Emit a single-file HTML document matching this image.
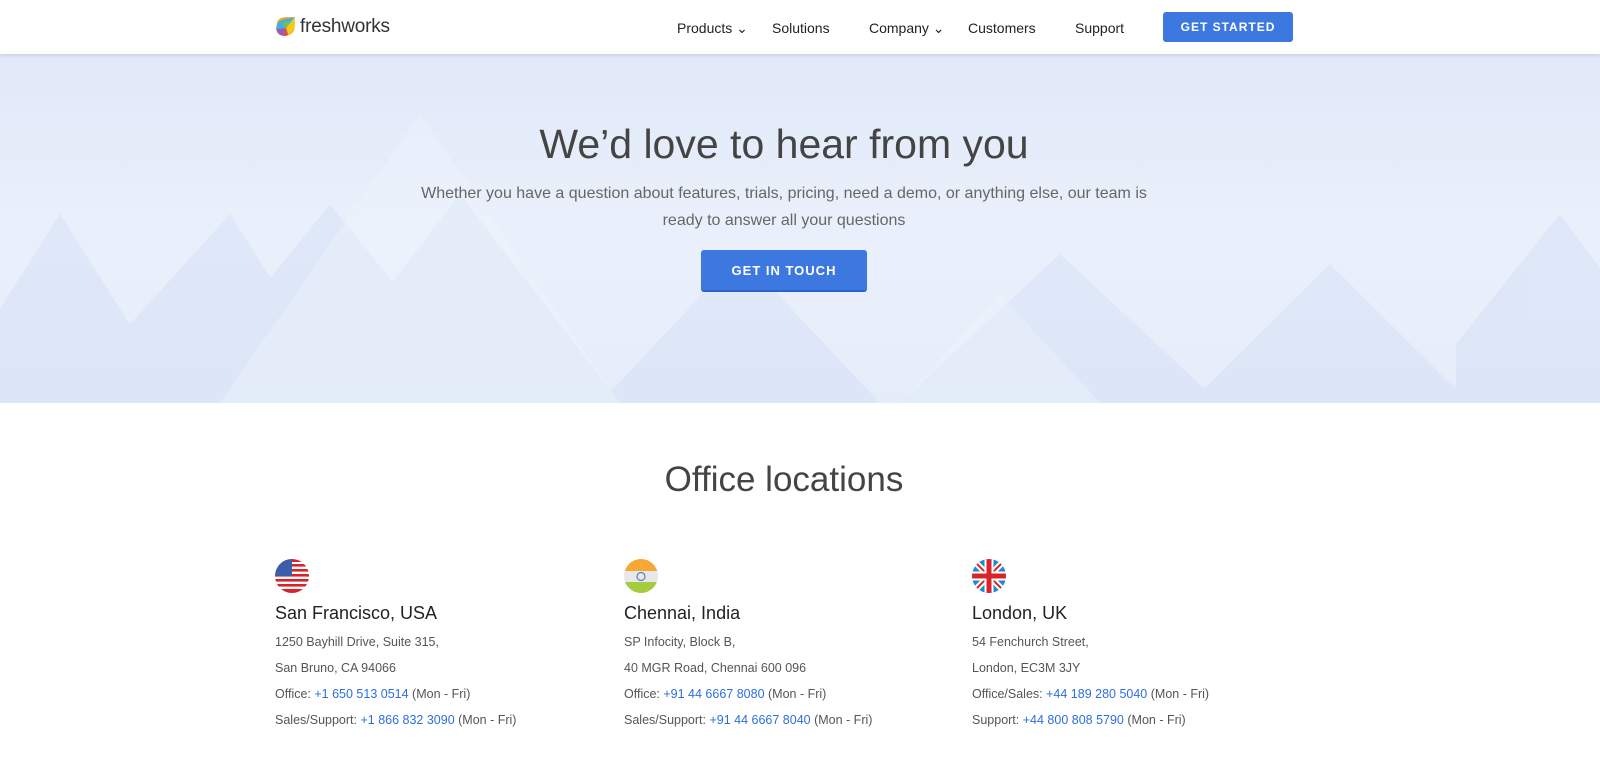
<!DOCTYPE html>
<html><head><meta charset="utf-8"><style>
*{margin:0;padding:0;box-sizing:border-box}
body{width:1600px;height:775px;overflow:hidden;background:#fff;font-family:"Liberation Sans",sans-serif;color:#333;position:relative}
.nav{position:absolute;top:0;left:0;width:1600px;height:54px;background:#fff;box-shadow:0 1px 4px rgba(0,0,0,.12);z-index:5}
.logo{position:absolute;left:275px;top:15px;display:flex;align-items:center}
.logo span{font-size:19px;color:#333;margin-left:3px;letter-spacing:-0.2px}
.nav a{position:absolute;top:20px;font-size:14px;color:#222;text-decoration:none}
.btn1{position:absolute;left:1163px;top:12px;width:130px;height:30px;background:#3c78e0;border-radius:3px;color:#fff;font-size:12px;font-weight:bold;letter-spacing:1px;text-align:center;line-height:30px}
.hero{position:absolute;top:54px;left:0;width:1600px;height:349px;background:linear-gradient(#e0e8f9,#eaf0fb 50%,#e6edfa);overflow:hidden}
h1{position:absolute;top:121px;left:0;width:1568px;text-align:center;font-weight:normal;font-size:41px;color:#444}
.sub{position:absolute;top:180px;left:402px;width:764px;text-align:center;font-size:16px;line-height:27px;color:#666}
.btn2{position:absolute;left:701px;top:250px;width:166px;height:42px;background:#3c78e0;border-radius:3px;color:#fff;font-size:13px;font-weight:bold;letter-spacing:1px;text-align:center;line-height:42px;border-bottom:2px solid #2a62cc}
h2{position:absolute;top:460px;left:0;width:1568px;text-align:center;font-weight:normal;font-size:35px;color:#444}
.col{position:absolute;top:559px;width:320px}
.col svg{display:block}
.col h3{font-weight:normal;font-size:18px;color:#222;margin-top:10px;height:26px}
.col p{font-size:12.5px;color:#555;line-height:26px}
.col p b{font-weight:normal;color:#2d6fe0}
</style></head><body>
<div class="nav">
 <div class="logo"><svg width="22" height="24" viewBox="0 0 20 22"><path d="M2 6 Q4 2 10 2 L18 2 L18 10 Q18 18 10 19 Q2 20 1 13 Z" fill="#f5a623"/><path d="M1 13 Q1 6 8 4 L18 2 L10 12 Z" fill="#3fb0e5"/><path d="M10 12 L18 2 L18 10 Q17 16 12 18 Z" fill="#f7c91c"/><path d="M1 13 L10 12 L8 19 Q3 19 1 13Z" fill="#9b59b6"/><path d="M10 12 L12 18 Q10 20 8 19Z" fill="#e74c3c"/><path d="M6 8 L14 5 L10 12 Z" fill="#7ac143"/></svg><span>freshworks</span></div>
 <a style="left:677px">Products ⌄</a>
 <a style="left:772px">Solutions</a>
 <a style="left:869px">Company ⌄</a>
 <a style="left:968px">Customers</a>
 <a style="left:1075px">Support</a>
 <div class="btn1">GET STARTED</div>
</div>
<div class="hero">
 <svg width="1600" height="349" style="position:absolute;left:0;top:0">
  <g fill="#c8d8f4" opacity="0.3">
   <polygon points="-60,349 60,160 180,349"/>
   <polygon points="112,349 112,290 230,160 350,349"/>
   <polygon points="170,349 330,150 490,349"/>
   <polygon points="300,349 460,140 620,349"/>
   <polygon points="600,349 740,200 880,349"/>
   <polygon points="900,349 1060,200 1220,349"/>
   <polygon points="1190,349 1330,210 1470,349"/>
   <polygon points="1456,349 1456,290 1560,160 1700,349"/>
  </g>
  <g fill="#f2f6fd" opacity="0.35">
   <polygon points="220,349 420,60 620,349"/>
   <polygon points="900,349 1000,240 1100,349"/>
  </g>
 </svg>
</div>
<h1>We’d love to hear from you</h1>
<div class="sub">Whether you have a question about features, trials, pricing, need a demo, or anything else, our team is ready to answer all your questions</div>
<div class="btn2">GET IN TOUCH</div>
<h2>Office locations</h2>

<div class="col" style="left:275px">
 <svg width="34" height="34" viewBox="0 0 34 34"><defs><clipPath id="c1"><circle cx="17" cy="17" r="17"/></clipPath></defs><g clip-path="url(#c1)"><rect width="34" height="34" fill="#fff"/><g fill="#d8232a"><rect y="0" width="34" height="3"/><rect y="5" width="34" height="2.6"/><rect y="10" width="34" height="2.6"/><rect y="15" width="34" height="2.6"/><rect y="20" width="34" height="2.6"/><rect y="25" width="34" height="2.6"/><rect y="30" width="34" height="4"/></g><rect width="17" height="17" fill="#3c5ea8"/></g></svg>
 <h3>San Francisco, USA</h3>
 <p>1250 Bayhill Drive, Suite 315,</p>
 <p>San Bruno, CA 94066</p>
 <p>Office: <b>+1 650 513 0514</b> (Mon - Fri)</p>
 <p>Sales/Support: <b>+1 866 832 3090</b> (Mon - Fri)</p>
</div>
<div class="col" style="left:624px">
 <svg width="34" height="34" viewBox="0 0 34 34"><defs><clipPath id="c2"><circle cx="17" cy="17" r="17"/></clipPath></defs><g clip-path="url(#c2)"><rect width="34" height="12" fill="#f7a733"/><rect y="12" width="34" height="11" fill="#e8e8e8"/><rect y="23" width="34" height="11" fill="#a5cc3f"/><circle cx="17" cy="17.5" r="4" fill="none" stroke="#5b7fc4" stroke-width="1.2"/></g></svg>
 <h3>Chennai, India</h3>
 <p>SP Infocity, Block B,</p>
 <p>40 MGR Road, Chennai 600 096</p>
 <p>Office: <b>+91 44 6667 8080</b> (Mon - Fri)</p>
 <p>Sales/Support: <b>+91 44 6667 8040</b> (Mon - Fri)</p>
</div>
<div class="col" style="left:972px">
 <svg width="34" height="34" viewBox="0 0 34 34"><defs><clipPath id="c3"><circle cx="17" cy="17" r="17"/></clipPath></defs><g clip-path="url(#c3)"><rect width="34" height="34" fill="#1f8ad0"/><path d="M0 0L34 34M34 0L0 34" stroke="#fff" stroke-width="6"/><path d="M0 0L34 34M34 0L0 34" stroke="#d8232a" stroke-width="2"/><path d="M17 0V34M0 17H34" stroke="#fff" stroke-width="9"/><path d="M17 0V34M0 17H34" stroke="#d8232a" stroke-width="5"/></g></svg>
 <h3>London, UK</h3>
 <p>54 Fenchurch Street,</p>
 <p>London, EC3M 3JY</p>
 <p>Office/Sales: <b>+44 189 280 5040</b> (Mon - Fri)</p>
 <p>Support: <b>+44 800 808 5790</b> (Mon - Fri)</p>
</div>
</body></html>
